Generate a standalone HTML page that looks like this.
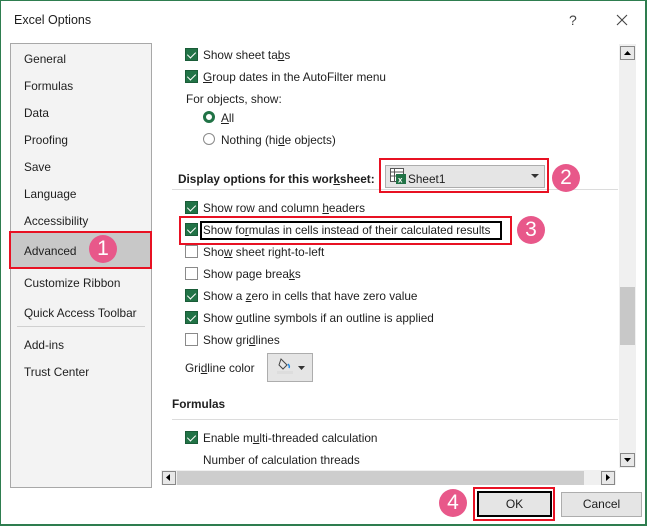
<!DOCTYPE html>
<html><head><style>
*{margin:0;padding:0;box-sizing:border-box}
body{width:647px;height:526px;background:#fff;font-family:"Liberation Sans",sans-serif;font-size:11.8px;color:#1e1e1e;position:relative;overflow:hidden}
.a{position:absolute;white-space:nowrap}
.frame{position:absolute;left:0;top:0;width:647px;height:526px;border:1px solid #2e7d4f;border-right-width:2px;border-bottom-width:2px}
.left{position:absolute;left:10px;top:43px;width:142px;height:445px;background:#f3f3f3;border:1px solid #a8a8a8}
.li{position:absolute;left:13px}
.cb{position:absolute;width:13px;height:13px;background:#217346;border:1px solid #1a5c38}
.cb::after{content:"";position:absolute;left:3px;top:1px;width:4px;height:7px;border:solid #fff;border-width:0 1.5px 1.5px 0;transform:rotate(45deg)}
.ub{position:absolute;width:13px;height:13px;background:#fff;border:1px solid #8a8a8a}
.badge{position:absolute;width:28px;height:28px;border-radius:50%;background:#e8588a;color:#fff;font-size:21px;text-align:center;line-height:28px}
.red{position:absolute;border:2px solid #e81123}
.sep{position:absolute;height:1px;background:#dcdcdc}
.btn{position:absolute;background:#e5e5e5;border:1px solid #adadad;text-align:center;line-height:22px;font-size:12px}
</style></head><body>
<div class="frame"></div>
<div class="a" style="left:14px;top:13px;font-size:12.5px">Excel Options</div>
<div class="a" style="left:569px;top:12px;font-size:14px;color:#444">?</div>
<svg class="a" style="left:616px;top:14px" width="12" height="12"><path d="M1 1L11 11M11 1L1 11" stroke="#444" stroke-width="1.1"/></svg>

<div class="left">
<div class="li a" style="top:8px">General</div>
<div class="li a" style="top:35px">Formulas</div>
<div class="li a" style="top:62px">Data</div>
<div class="li a" style="top:89px">Proofing</div>
<div class="li a" style="top:116px">Save</div>
<div class="li a" style="top:143px">Language</div>
<div class="li a" style="top:170px">Accessibility</div>
<div class="a" style="left:0;top:189px;width:140px;height:36px;background:#c8c8c8"></div>
<div class="li a" style="top:200px">Advanced</div>
<div class="li a" style="top:232px">Customize Ribbon</div>
<div class="li a" style="top:262px">Quick Access Toolbar</div>
<div class="sep" style="left:6px;top:282px;width:128px;background:#d0d0d0"></div>
<div class="li a" style="top:294px">Add-ins</div>
<div class="li a" style="top:321px">Trust Center</div>
</div>
<div class="red" style="left:9px;top:231px;width:143px;height:38px"></div>
<div class="badge" style="left:89px;top:235px">1</div>

<div class="cb" style="left:185px;top:48px"></div><div class="a" style="left:203px;top:48px">Show sheet ta<u>b</u>s</div>
<div class="cb" style="left:185px;top:70px"></div><div class="a" style="left:203px;top:70px"><u>G</u>roup dates in the AutoFilter menu</div>
<div class="a" style="left:186px;top:92px">For objects, show:</div>
<div class="a" style="left:203px;top:111px;width:12px;height:12px;border-radius:50%;border:3px solid #217346"></div><div class="a" style="left:221px;top:111px"><u>A</u>ll</div>
<div class="a" style="left:203px;top:133px;width:12px;height:12px;border-radius:50%;border:1px solid #8a8a8a"></div><div class="a" style="left:221px;top:133px">Nothing (hi<u>d</u>e objects)</div>
<div class="a" style="left:178px;top:172px;font-weight:bold">Display options for this wor<u>k</u>sheet:</div>
<div class="sep" style="left:172px;top:189px;width:446px"></div>
<div class="a" style="left:385px;top:165px;width:160px;height:23px;background:#e5e5e5;border:1px solid #adadad"></div>
<svg class="a" style="left:390px;top:168px" width="18" height="17"><rect x="0.5" y="0.5" width="13" height="13" fill="#fff" stroke="#555"/><path d="M0.5 4H13.5M0.5 8H13.5M4.5 0.5V13.5" stroke="#555"/><rect x="6" y="6" width="10" height="10" fill="#217346"/><text x="8" y="14.5" font-size="8" fill="#fff" font-family="Liberation Sans" font-weight="bold">x</text></svg>
<div class="a" style="left:408px;top:172px">Sheet1</div>
<svg class="a" style="left:531px;top:174px" width="9" height="5"><path d="M0 0H8L4 4Z" fill="#333"/></svg>
<div class="red" style="left:379px;top:158px;width:170px;height:35px"></div>
<div class="badge" style="left:552px;top:164px">2</div>

<div class="cb" style="left:185px;top:201px"></div><div class="a" style="left:203px;top:201px">Show row and column <u>h</u>eaders</div>
<div class="cb" style="left:185px;top:223px"></div>
<div class="a" style="left:200px;top:221px;width:302px;height:19px;border:2px solid #000"></div>
<div class="a" style="left:203px;top:224px;font-size:11.6px">Show fo<u>r</u>mulas in cells instead of their calculated results</div>
<div class="red" style="left:179px;top:216px;width:333px;height:29px"></div>
<div class="badge" style="left:517px;top:216px">3</div>
<div class="ub" style="left:185px;top:245px"></div><div class="a" style="left:203px;top:245px">Sho<u>w</u> sheet right-to-left</div>
<div class="ub" style="left:185px;top:267px"></div><div class="a" style="left:203px;top:267px">Show page brea<u>k</u>s</div>
<div class="cb" style="left:185px;top:289px"></div><div class="a" style="left:203px;top:289px">Show a <u>z</u>ero in cells that have zero value</div>
<div class="cb" style="left:185px;top:311px"></div><div class="a" style="left:203px;top:311px">Show <u>o</u>utline symbols if an outline is applied</div>
<div class="ub" style="left:185px;top:333px"></div><div class="a" style="left:203px;top:333px">Show gri<u>d</u>lines</div>
<div class="a" style="left:185px;top:361px">Gri<u>d</u>line color</div>
<div class="a" style="left:267px;top:353px;width:46px;height:29px;background:#e5e5e5;border:1px solid #adadad"></div>
<svg class="a" style="left:277px;top:357px" width="16" height="18"><path d="M4 2L10 8L6 12L2 8Z" fill="none" stroke="#444"/><path d="M11 7Q13 9 12 11" stroke="#1e88e5" fill="none" stroke-width="1.5"/><rect x="0" y="14" width="16" height="3" fill="#ddd"/></svg>
<svg class="a" style="left:298px;top:366px" width="8" height="5"><path d="M0 0H7L3.5 4Z" fill="#333"/></svg>
<div class="a" style="left:172px;top:397px;font-weight:bold">Formulas</div>
<div class="sep" style="left:172px;top:419px;width:446px"></div>
<div class="cb" style="left:185px;top:431px"></div><div class="a" style="left:203px;top:431px">Enable m<u>u</u>lti-threaded calculation</div>
<div class="a" style="left:203px;top:453px">Number of calculation threads</div>

<div class="a" style="left:619px;top:44px;width:17px;height:424px;background:#f0f0f0"></div>
<div class="a" style="left:620px;top:46px;width:15px;height:14px;border:1px solid #888;background:#e8e8e8"></div>
<svg class="a" style="left:624px;top:51px" width="8" height="5"><path d="M0 4H7L3.5 0Z" fill="#000"/></svg>
<div class="a" style="left:620px;top:287px;width:15px;height:58px;background:#c8c8c8"></div>
<div class="a" style="left:620px;top:453px;width:15px;height:14px;border:1px solid #888;background:#e8e8e8"></div>
<svg class="a" style="left:624px;top:458px" width="8" height="5"><path d="M0 0H7L3.5 4Z" fill="#000"/></svg>
<div class="a" style="left:161px;top:470px;width:455px;height:15px;background:#f0f0f0"></div>
<div class="a" style="left:162px;top:471px;width:14px;height:14px;border:1px solid #888;background:#e8e8e8"></div>
<svg class="a" style="left:166px;top:474px" width="5" height="8"><path d="M4 0V7L0 3.5Z" fill="#000"/></svg>
<div class="a" style="left:177px;top:471px;width:407px;height:14px;background:#cdcdcd"></div>
<div class="a" style="left:601px;top:471px;width:14px;height:14px;border:1px solid #888;background:#e8e8e8"></div>
<svg class="a" style="left:606px;top:474px" width="5" height="8"><path d="M0 0V7L4 3.5Z" fill="#000"/></svg>

<div class="badge" style="left:439px;top:489px">4</div>
<div class="red" style="left:473px;top:487px;width:82px;height:34px"></div>
<div class="btn" style="left:477px;top:491px;width:75px;height:26px;border:2px solid #000">OK</div>
<div class="btn" style="left:561px;top:492px;width:81px;height:25px">Cancel</div>
</body></html>
